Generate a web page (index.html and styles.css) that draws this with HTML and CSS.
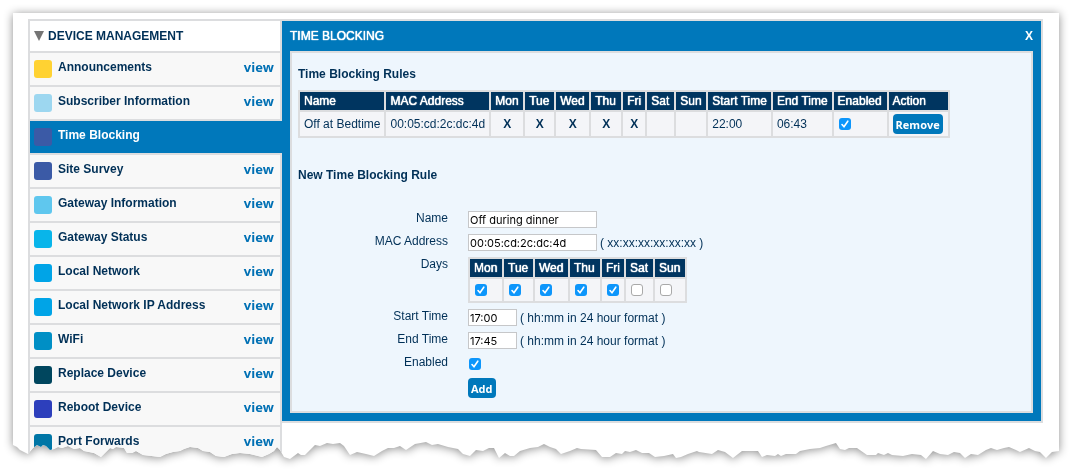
FILE: index.html
```html
<!DOCTYPE html>
<html lang="en">
<head>
    <meta charset="UTF-8">
    <meta name="viewport" content="width=device-width, initial-scale=1.0">
    <title>Time Blocking</title>
    <link rel="stylesheet" href="styles.css">
</head>
<body>

    <!-- Torn paper edge -->
    <svg class="defs" width="0" height="0" aria-hidden="true">
        <clipPath id="torn" clipPathUnits="objectBoundingBox">
            <path transform="scale(0.000956 0.002232) translate(-13 -13)" d="M13 13 L13 447 17 449 20 452 28 456 33 450 37 447 41 449 43 447 46 448 50 452 54 451 58 449 62 450 68 448 74 451 80 450 84 453 94 455 101 459 106 454 110 450 113 451 116 449 124 450 127 455 132 455 136 453 143 457 160 459 166 456 173 454 180 453 184 451 190 449 198 450 203 453 210 454 216 458 224 459 232 456 240 455 250 456 262 459 269 456 274 453 277 449 280 452 284 459 290 461 298 455 301 457 305 457 315 447 320 448 327 445 333 446 340 445 344 448 350 457 357 454 366 456 374 458 382 453 388 450 394 450 400 448 406 452 415 446 426 444 432 447 438 446 448 449 458 451 463 456 470 458 476 452 483 453 489 450 494 450 499 460 505 455 510 458 514 458 520 453 530 450 538 449 544 446 550 449 556 451 561 456 570 453 577 450 581 451 596 452 602 459 610 459 616 455 622 456 625 453 630 454 636 452 642 455 649 455 655 459 664 458 673 456 676 460 681 459 688 456 697 453 699 454 712 456 718 452 725 454 733 460 742 453 758 453 762 459 767 457 775 458 778 456 781 458 786 456 796 456 800 453 810 451 820 450 826 448 836 445 840 451 845 452 849 450 857 450 867 457 876 457 878 455 884 457 888 455 892 457 903 458 912 456 921 457 926 461 933 453 940 456 948 457 954 454 960 455 965 460 971 456 978 457 986 452 991 450 997 452 1004 450 1009 449 1016 452 1020 454 1029 450 1035 453 1040 454 1046 460 1052 454 1059 453 1060 13 Z"/>
        </clipPath>
    </svg>

    <div class="shadow">
        <div class="paper">

            <!-- Device menu -->
            <nav class="menu">
                <h2 class="menu-title">
                    <svg class="arrow" width="10" height="10" viewBox="0 0 10 10" aria-hidden="true"><path d="M0 0H10L5 10Z" fill="#757575"/></svg>
                    DEVICE MANAGEMENT
                </h2>
                <ul class="menu-list">
                    <li class="item"><span class="box yellow"></span><span class="item-name">Announcements</span><a class="view" href="#">view</a></li>
                    <li class="item"><span class="box pale"></span><span class="item-name">Subscriber Information</span><a class="view" href="#">view</a></li>
                    <li class="item selected"><span class="box indigo"></span><span class="item-name">Time Blocking</span></li>
                    <li class="item"><span class="box indigo"></span><span class="item-name">Site Survey</span><a class="view" href="#">view</a></li>
                    <li class="item"><span class="box light"></span><span class="item-name">Gateway Information</span><a class="view" href="#">view</a></li>
                    <li class="item"><span class="box cyan"></span><span class="item-name">Gateway Status</span><a class="view" href="#">view</a></li>
                    <li class="item"><span class="box sky"></span><span class="item-name">Local Network</span><a class="view" href="#">view</a></li>
                    <li class="item"><span class="box sky"></span><span class="item-name">Local Network IP Address</span><a class="view" href="#">view</a></li>
                    <li class="item"><span class="box blue"></span><span class="item-name">WiFi</span><a class="view" href="#">view</a></li>
                    <li class="item"><span class="box dark"></span><span class="item-name">Replace Device</span><a class="view" href="#">view</a></li>
                    <li class="item"><span class="box violet"></span><span class="item-name">Reboot Device</span><a class="view" href="#">view</a></li>
                    <li class="item"><span class="box teal"></span><span class="item-name">Port Forwards</span><a class="view" href="#">view</a></li>
                </ul>
            </nav>

            <!-- Time blocking panel -->
            <main class="panel">
                <div class="panel-head">
                    <h1 class="panel-title">TIME BLOCKING</h1>
                    <button class="close" type="button">X</button>
                </div>
                <div class="content">
                    <h3 class="heading">Time Blocking Rules</h3>
                    <table class="grid rules">
                        <colgroup>
                            <col><col>
                            <col class="col-mon"><col class="col-tue"><col class="col-wed"><col class="col-thu"><col class="col-fri"><col class="col-sat"><col class="col-sun">
                            <col><col><col class="col-enabled"><col class="col-action">
                        </colgroup>
                        <thead>
                            <tr>
                                <th>Name</th><th>MAC Address</th><th>Mon</th><th>Tue</th><th>Wed</th><th>Thu</th><th>Fri</th><th>Sat</th><th>Sun</th><th>Start Time</th><th>End Time</th><th>Enabled</th><th>Action</th>
                            </tr>
                        </thead>
                        <tbody>
                            <tr>
                                <td>Off at Bedtime</td>
                                <td>00:05:cd:2c:dc:4d</td>
                                <td class="day">X</td>
                                <td class="day">X</td>
                                <td class="day">X</td>
                                <td class="day">X</td>
                                <td class="day">X</td>
                                <td></td>
                                <td></td>
                                <td>22:00</td>
                                <td>06:43</td>
                                <td><input class="check" type="checkbox" aria-label="Enabled" checked></td>
                                <td><button class="button" type="button">Remove</button></td>
                            </tr>
                        </tbody>
                    </table>

                    <h3 class="heading">New Time Blocking Rule</h3>
                    <form class="form">
                        <label class="label" for="name">Name</label>
                        <div class="field"><input class="text" id="name" type="text" value="Off during dinner"></div>

                        <label class="label" for="mac">MAC Address</label>
                        <div class="field"><input class="text" id="mac" type="text" value="00:05:cd:2c:dc:4d"><span>( xx:xx:xx:xx:xx:xx )</span></div>

                        <span class="label">Days</span>
                        <div class="field">
                            <table class="grid days">
                                <colgroup>
                                    <col class="col-mon"><col class="col-tue"><col class="col-wed"><col class="col-thu"><col class="col-fri"><col class="col-sat"><col class="col-sun">
                                </colgroup>
                                <thead>
                                    <tr>
                                        <th><label for="mon">Mon</label></th>
                                        <th><label for="tue">Tue</label></th>
                                        <th><label for="wed">Wed</label></th>
                                        <th><label for="thu">Thu</label></th>
                                        <th><label for="fri">Fri</label></th>
                                        <th><label for="sat">Sat</label></th>
                                        <th><label for="sun">Sun</label></th>
                                    </tr>
                                </thead>
                                <tbody>
                                    <tr>
                                        <td><input class="check" id="mon" type="checkbox" checked></td>
                                        <td><input class="check" id="tue" type="checkbox" checked></td>
                                        <td><input class="check" id="wed" type="checkbox" checked></td>
                                        <td><input class="check" id="thu" type="checkbox" checked></td>
                                        <td><input class="check" id="fri" type="checkbox" checked></td>
                                        <td><input class="check" id="sat" type="checkbox"></td>
                                        <td><input class="check" id="sun" type="checkbox"></td>
                                    </tr>
                                </tbody>
                            </table>
                        </div>

                        <label class="label" for="start">Start Time</label>
                        <div class="field"><input class="text time" id="start" type="text" value="17:00"><span>( hh:mm in 24 hour format )</span></div>

                        <label class="label" for="end">End Time</label>
                        <div class="field"><input class="text time" id="end" type="text" value="17:45"><span>( hh:mm in 24 hour format )</span></div>

                        <label class="label" for="enabled">Enabled</label>
                        <div class="field"><input class="check" id="enabled" type="checkbox" checked></div>

                        <div class="field submit"><button class="button" type="button">Add</button></div>
                    </form>
                </div>
            </main>

        </div>
    </div>

</body>
</html>
```
FILE: styles.css
```css
* {
    box-sizing: border-box;
}

body {
    font-family: "Liberation Sans", Arial, sans-serif;
    font-size: 12px;
    line-height: 14px;
    color: #003057;
    background: #fff;
    margin: 0;
}

h1, h2, h3, ul {
    margin: 0;
    padding: 0;
    font-size: 12px;
}

.defs {
    position: absolute;
}

/* Paper */
.shadow {
    padding: 13px;
    filter: drop-shadow(0 1px 5px rgba(0, 0, 0, 0.45));
}

.paper {
    display: flex;
    align-items: flex-start;
    padding: 6px 16px 0 15px;
    background: #fff;
    clip-path: url(#torn);
}

/* Device menu */
.menu {
    width: 254px;
    flex-shrink: 0;
    border: 2px solid #dcdddf;
    border-bottom: none;
}

.menu-title {
    display: flex;
    align-items: center;
    gap: 4px;
    height: 30px;
    padding: 0 4px;
}

.menu-list {
    list-style: none;
}

.item {
    display: flex;
    align-items: flex-start;
    gap: 6px;
    height: 34px;
    padding: 7px 6px 0 4px;
    border-top: 2px solid #dcdddf;
    background: #f8f8f8;
    font-weight: bold;
}

.item-name {
    flex: 1;
}

.selected {
    margin-right: -2px;
    background: linear-gradient(#0078bb, #0078bb) padding-box;
    color: #fff;
}

.view {
    font-family: "Open Sans", sans-serif;
    font-size: 13px;
    color: #0070b4;
    text-decoration: none;
}

.box {
    width: 18px;
    height: 18px;
    border-radius: 3px;
}

.yellow { background: #ffd232; }
.pale { background: #9dd7f0; }
.indigo { background: #3b5aa6; }
.light { background: #5fc7ee; }
.cyan { background: #08b5ea; }
.sky { background: #00a4e7; }
.blue { background: #008fc5; }
.dark { background: #00465e; }
.violet { background: #2d3fbc; }
.teal { background: #0076a6; }

/* Panel */
.panel {
    flex: 1;
    padding: 0 8px 8px;
    background: #0078bb;
    border: 2px solid #dcdddf;
    border-left: none;
}

.panel-head {
    display: flex;
    align-items: center;
    justify-content: space-between;
    height: 30px;
    color: #fff;
}

.panel-title {
    font-weight: normal;
    text-shadow: 0 0 1px #fff, 0 0 1px #fff;
}

.close {
    padding: 0;
    border: none;
    background: none;
    color: #fff;
    font: bold 12px "Liberation Sans", Arial, sans-serif;
}

.content {
    padding: 14px 6px 13px;
    border: 2px solid #dcdddf;
    background: #eef6fd;
}

/* Tables */
.grid {
    border-collapse: collapse;
}

.grid th,
.grid td {
    padding: 2px 4px;
    border: 2px solid #dcdddf;
    text-align: left;
}

.grid th {
    background: #003560;
    color: #fff;
    font-weight: normal;
    text-shadow: 0 0 1px #fff, 0 0 1px #fff;
}

.grid td {
    background: #f4f5f8;
}

.grid .day {
    text-align: center;
    font-weight: bold;
}

.col-mon { width: 34px; }
.col-tue { width: 31px; }
.col-wed { width: 35px; }
.col-thu { width: 32px; }
.col-fri { width: 24px; }
.col-sat { width: 29px; }
.col-sun { width: 32px; }
.col-enabled { width: 55px; }
.col-action { width: 61px; }

.rules {
    margin: 9px 0 30px;
}

.days td {
    padding: 5px 4px;
}

/* Form */
.form {
    display: grid;
    grid-template-columns: 150px 1fr;
    gap: 6px 20px;
    margin-top: 29px;
}

.label {
    text-align: right;
}

.field {
    display: flex;
    align-items: center;
    gap: 3px;
    min-height: 17px;
}

.submit {
    grid-column: 2;
}

.text {
    width: 129px;
    height: 17px;
    padding: 0 1px;
    border: 1px solid #c6c7c9;
    background: #fff;
    color: #000;
    font: 11px Inter, sans-serif;
}

.time {
    width: 49px;
}

.check {
    display: block;
    appearance: none;
    width: 12px;
    height: 12px;
    margin: 0 1px;
    border: 1px solid #a9a9a9;
    border-radius: 3px;
    background: #fff;
}

.check:checked {
    border: none;
    background: #0d96fb url("data:image/svg+xml,%3Csvg xmlns='http://www.w3.org/2000/svg' viewBox='0 0 12 12'%3E%3Cpath d='M3 6.5L5 8.8L8.8 3.2' fill='none' stroke='white' stroke-width='1.6' stroke-linecap='round'/%3E%3C/svg%3E");
}

.button {
    display: block;
    height: 20px;
    padding: 0 3px;
    border: none;
    border-radius: 4px;
    background: #0078bb;
    color: #fff;
    font: bold 11px "Open Sans", sans-serif;
}
```
